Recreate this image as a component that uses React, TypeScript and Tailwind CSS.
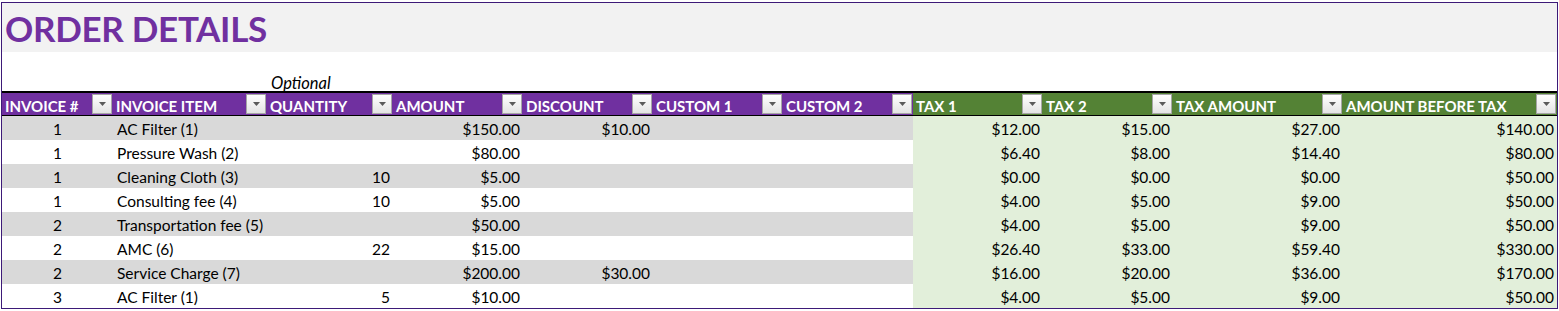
import React from "react";

const font = { fontFamily: "Lato, 'Open Sans', sans-serif" };

type Col = { label: string; green?: boolean; align: "center" | "left" | "right" };

const cols: Col[] = [
  { label: "INVOICE #", align: "center" },
  { label: "INVOICE ITEM", align: "left" },
  { label: "QUANTITY", align: "right" },
  { label: "AMOUNT", align: "right" },
  { label: "DISCOUNT", align: "right" },
  { label: "CUSTOM 1", align: "right" },
  { label: "CUSTOM 2", align: "right" },
  { label: "TAX 1", align: "right", green: true },
  { label: "TAX 2", align: "right", green: true },
  { label: "TAX AMOUNT", align: "right", green: true },
  { label: "AMOUNT BEFORE TAX", align: "right", green: true },
];

const rows: string[][] = [
  ["1", "AC Filter (1)", "", "$150.00", "$10.00", "", "", "$12.00", "$15.00", "$27.00", "$140.00"],
  ["1", "Pressure Wash (2)", "", "$80.00", "", "", "", "$6.40", "$8.00", "$14.40", "$80.00"],
  ["1", "Cleaning Cloth (3)", "10", "$5.00", "", "", "", "$0.00", "$0.00", "$0.00", "$50.00"],
  ["1", "Consulting fee (4)", "10", "$5.00", "", "", "", "$4.00", "$5.00", "$9.00", "$50.00"],
  ["2", "Transportation fee (5)", "", "$50.00", "", "", "", "$4.00", "$5.00", "$9.00", "$50.00"],
  ["2", "AMC (6)", "22", "$15.00", "", "", "", "$26.40", "$33.00", "$59.40", "$330.00"],
  ["2", "Service Charge (7)", "", "$200.00", "$30.00", "", "", "$16.00", "$20.00", "$36.00", "$170.00"],
  ["3", "AC Filter (1)", "5", "$10.00", "", "", "", "$4.00", "$5.00", "$9.00", "$50.00"],
];

const gridCols = "grid grid-cols-[111px_154px_126px_130px_130px_130px_130px_130px_130px_170px_214px]";

function Dropdown() {
  return (
    <div className="w-[20px] h-[20px] shrink-0 border border-[#a6a6a6] bg-gradient-to-b from-[#ffffff] to-[#e4e4e4] flex items-center justify-center">
      <svg width="7" height="4" viewBox="0 0 7 4">
        <polygon points="0,0 7,0 3.5,4" fill="#5a5a5a" />
      </svg>
    </div>
  );
}

export default function App() {
  return (
    <div className="w-[1559px] h-[311px] bg-white" style={font}>
      <div className="h-[2px]" />
      <div className="ml-[1px] w-[1557px] h-[307px] border border-[#3d1a78] overflow-hidden flex flex-col">
        <div className="h-[49px] bg-[#f2f2f2] pl-[3px] pt-[3px] flex items-center">
          <span className="text-[35px] font-bold text-[#7030a0] leading-none tracking-[-0.3px]">ORDER DETAILS</span>
        </div>
        <div className={`${gridCols} h-[40px]`}>
          <div />
          <div />
          <div className="flex items-end pb-0 pl-[4px]">
            <span className="italic text-[16.5px] text-black leading-[16px]">Optional</span>
          </div>
        </div>
        <div className={`${gridCols} h-[25px] border-t-2 border-b border-black`}>
          {cols.map((c) => (
            <div
              key={c.label}
              className={`${c.green ? "bg-[#548235]" : "bg-[#7030a0]"} flex items-center justify-between pl-[3px] pr-[1px]`}
            >
              <span className="text-white font-bold text-[15px] leading-none whitespace-nowrap pt-[4px]">{c.label}</span>
              <Dropdown />
            </div>
          ))}
        </div>
        {rows.map((r, ri) => (
          <div key={ri} className={`${gridCols} h-[24px] shrink-0`}>
            {r.map((v, ci) => {
              const c = cols[ci];
              const bg = c.green ? "bg-[#e2efda]" : ri % 2 === 0 ? "bg-[#d9d9d9]" : "bg-white";
              const al =
                c.align === "center"
                  ? "justify-center"
                  : c.align === "left"
                  ? "justify-start pl-[4px]"
                  : "justify-end pr-[3px]";
              return (
                <div key={ci} className={`${bg} flex items-center pt-[4px] ${al} text-[15.5px] leading-none text-black whitespace-nowrap`}>
                  {v}
                </div>
              );
            })}
          </div>
        ))}
      </div>
    </div>
  );
}
